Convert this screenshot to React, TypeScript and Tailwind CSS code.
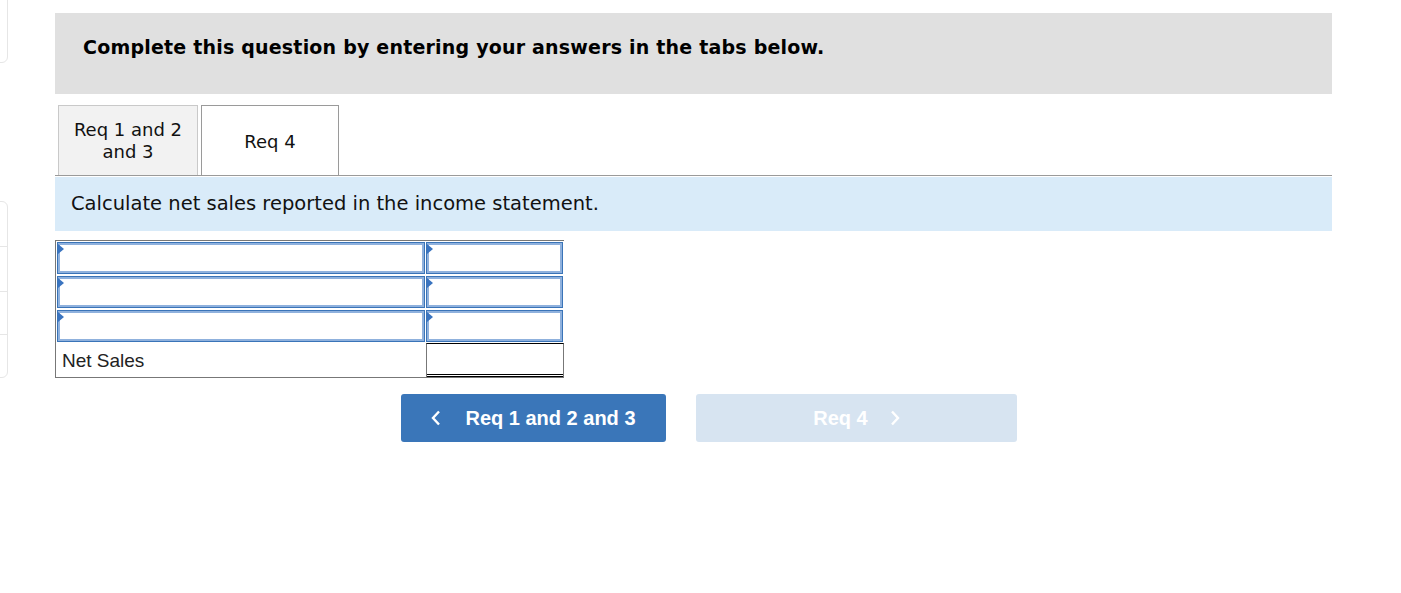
import React from 'react';

const verdana = { fontFamily: '"DejaVu Sans", Verdana, sans-serif' };

function InputCell() {
  return (
    <div className="relative h-full border border-[#3a74b8]">
      <div className="h-full w-full border-2 border-[#8fb1dd]" />
      <svg className="absolute left-0 top-[1px]" width="6" height="10" viewBox="0 0 6 10">
        <path d="M0 0 L6 5 L0 10 Z" fill="#3a74c0" />
      </svg>
    </div>
  );
}

function Chevron({ dir }: { dir: 'left' | 'right' }) {
  return (
    <svg width="10" height="16" viewBox="0 0 10 16" fill="none">
      <path
        d={dir === 'left' ? 'M8 1.5 L2 8 L8 14.5' : 'M2 1.5 L8 8 L2 14.5'}
        stroke="currentColor"
        strokeWidth="2.4"
      />
    </svg>
  );
}

export default function App() {
  return (
    <div className="relative min-h-[593px] w-full bg-white overflow-hidden">
      {/* cut-off sidebar fragments */}
      <div className="absolute left-[-10px] top-[-10px] h-[73px] w-[18px] rounded-br-[6px] border border-[#e6e6e6]" />
      <div className="absolute left-[-10px] top-[201px] flex h-[177px] w-[18px] flex-col rounded-r-[6px] border border-[#e6e6e6]">
        <div className="h-[45px] border-b border-[#e6e6e6]" />
        <div className="h-[45px] border-b border-[#e6e6e6]" />
        <div className="h-[43px] border-b border-[#e6e6e6]" />
      </div>

      <div className="ml-[55px] w-[1277px] pt-[13px]">
        <div className="h-[81px] bg-[#e0e0e0] pl-[28px] pt-[23px]" style={verdana}>
          <p className="text-[19px] font-bold leading-[22px] tracking-[0.2px] text-black">
            Complete this question by entering your answers in the tabs below.
          </p>
        </div>

        <div className="mt-[11px] flex items-end gap-[3px] border-b border-[#9a9a9a] pl-[3px]" style={verdana}>
          <div className="flex h-[70px] w-[140px] items-center justify-center border border-b-0 border-[#c9c9c9] bg-[#f2f2f2] text-center text-[18px] leading-[22px] text-[#111]">
            Req 1 and 2<br />and 3
          </div>
          <div className="flex h-[70px] w-[138px] items-center justify-center border border-b-0 border-[#9a9a9a] bg-white pt-[2px] text-[18px] text-[#111]">
            Req 4
          </div>
        </div>

        <div className="mt-[1px] flex h-[54px] items-center bg-[#d9ebf9] pl-[16px]" style={verdana}>
          <p className="text-[19.5px] text-[#111]">Calculate net sales reported in the income statement.</p>
        </div>

        <div className="mt-[9px] w-[509px] border-l border-t border-[#777]">
          {[0, 1, 2].map((i) => (
            <div key={i} className="flex h-[34px] p-[1px]">
              <div className="w-[369px] pr-[1px]">
                <InputCell />
              </div>
              <div className="w-[137px]">
                <InputCell />
              </div>
            </div>
          ))}
          <div className="flex h-[35px] border-b border-[#777]">
            <div
              className="flex w-[371px] items-center pl-[6px] pt-[2px] text-[19px] text-[#222]"
              style={{ fontFamily: '"Liberation Sans", Arial, sans-serif' }}
            >
              Net Sales
            </div>
            <div className="w-[138px] border-l border-r border-t border-l-[#777] border-r-[#777] border-t-black">
              <div className="mt-[30px] h-[3px] border-y border-black" />
            </div>
          </div>
        </div>

        <div
          className="mt-[16px] ml-[346px] flex gap-[30px]"
          style={{ fontFamily: '"Liberation Sans", Arial, sans-serif' }}
        >
          <button className="flex h-[48px] w-[265px] items-center justify-center gap-[24px] rounded-[3px] bg-[#3a76b9] text-[20px] font-bold text-white">
            <Chevron dir="left" />
            <span>Req 1 and 2 and 3</span>
          </button>
          <button className="flex h-[48px] w-[321px] items-center justify-center gap-[22px] rounded-[3px] bg-[#d7e4f1] text-[20px] font-bold text-white">
            <span>Req 4</span>
            <Chevron dir="right" />
          </button>
        </div>
      </div>
    </div>
  );
}
